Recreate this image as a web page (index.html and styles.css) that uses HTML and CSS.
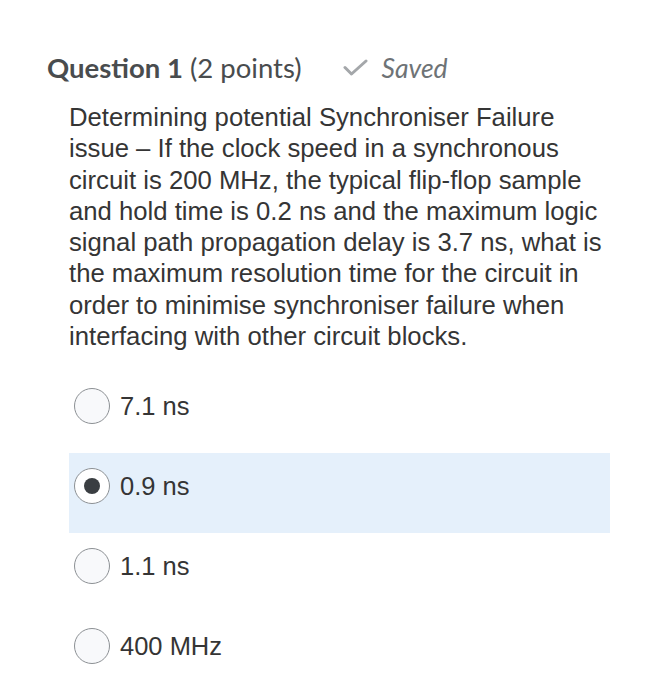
FILE: index.html
```html
<!DOCTYPE html>
<html>
<head>
<meta charset="utf-8">
<link rel="stylesheet" href="styles.css">
</head>
<body>
<div class="page">
  <div class="header">
    <h2 class="title"><span class="qnum">Question 1</span> (2 points)</h2>
    <div class="saved">
      <svg class="check" width="25" height="18" viewBox="0 0 25 18"><path d="M2 8.5 L8.5 15 L23 2" fill="none" stroke="#a4a7aa" stroke-width="3" stroke-linecap="round" stroke-linejoin="round"/></svg>
      <span>Saved</span>
    </div>
  </div>
  <div class="body">
    <p class="question">Determining potential Synchroniser Failure issue – If the clock speed in a synchronous circuit is 200 MHz, the typical flip-flop sample and hold time is 0.2 ns and the maximum logic signal path propagation delay is 3.7 ns, what is the maximum resolution time for the circuit in order to minimise synchroniser failure when interfacing with other circuit blocks.</p>
    <div class="options">
      <label class="option"><span class="radio"></span><span class="label">7.1 ns</span></label>
      <label class="option selected"><span class="radio"><span class="dot"></span></span><span class="label">0.9 ns</span></label>
      <label class="option"><span class="radio"></span><span class="label">1.1 ns</span></label>
      <label class="option"><span class="radio"></span><span class="label">400 MHz</span></label>
    </div>
  </div>
</div>
</body>
</html>
```

FILE: styles.css
```css
html, body {
  margin: 0;
  padding: 0;
  background: #ffffff;
}
.page {
  padding: 50px 0 0 47px;
  width: 563px;
}
.header {
  display: flex;
  align-items: center;
  height: 36px;
}
.title {
  margin: 0;
  font-family: Lato, "Open Sans", sans-serif;
  font-size: 27.5px;
  font-weight: 400;
  color: #494c4e;
  line-height: 36px;
}
.qnum {
  font-weight: 700;
}
.saved {
  display: flex;
  align-items: center;
  margin-left: 41px;
  font-family: Lato, sans-serif;
  font-style: italic;
  font-size: 26.5px;
  color: #6e7376;
}
.check {
  margin-right: 14px;
}
.body {
  padding-left: 22px;
  margin-top: 16px;
}
.question {
  margin: 0;
  font-family: "Liberation Sans", Arial, sans-serif;
  font-size: 25.7px;
  line-height: 31.3px;
  color: #353535;
}
.options {
  margin-top: 21px;
  display: flex;
  flex-direction: column;
}
.option {
  display: flex;
  align-items: flex-start;
  height: 80px;
  box-sizing: border-box;
  padding: 15px 0 0 5px;
  font-family: "Liberation Sans", Arial, sans-serif;
  font-size: 25.5px;
  color: #353535;
}
.option.selected {
  background: #e5f0fb;
}
.radio {
  width: 34px;
  height: 34px;
  border: 1.5px solid #8c9094;
  border-radius: 50%;
  background: #f8f9fb;
  display: flex;
  align-items: center;
  justify-content: center;
  flex: none;
}
.selected .radio {
  background: #ffffff;
}
.dot {
  width: 16px;
  height: 16px;
  border-radius: 50%;
  background: #3a3e42;
}
.label {
  margin-left: 10px;
  line-height: 37px;
}
```
